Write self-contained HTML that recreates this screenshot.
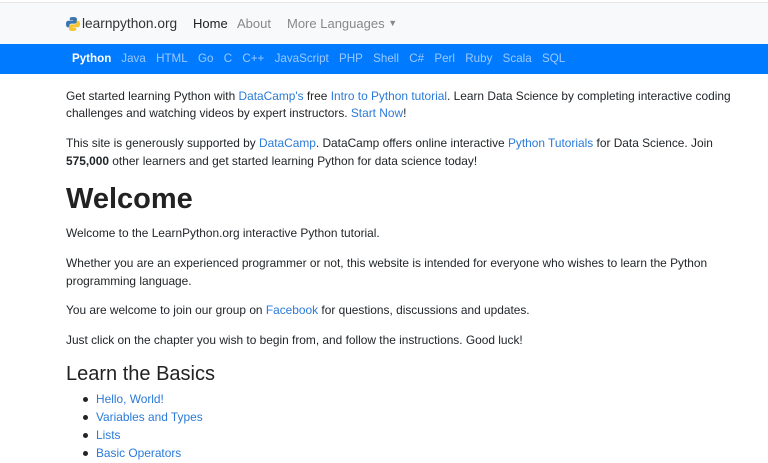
<!DOCTYPE html>
<html><head><style>
*{margin:0;padding:0;box-sizing:border-box}
body{width:768px;height:463px;overflow:hidden;background:#fff;font-family:"Liberation Sans","DejaVu Sans",sans-serif;color:#212529;position:relative}
.top{position:absolute;left:0;top:2px;width:768px;height:42px;background:#f8f9fa;border-top:1px solid #e6e6e6}
.blue{position:absolute;left:0;top:44px;width:768px;height:30px;background:#007bff}
.a{position:absolute;white-space:nowrap}
.l{position:absolute;left:66px;white-space:nowrap;font-size:11.9px;line-height:18px}
a{color:#2a7ad8;text-decoration:none}
.bl span{margin-right:10.3px;color:#9cc8ff}
ul li{position:absolute;left:96px;font-size:11.9px;line-height:18px;white-space:nowrap;list-style:none}
ul li:before{content:"";position:absolute;left-13px;left:-13px;top:7px;width:5px;height:5px;border-radius:50%;background:#212529}
</style></head><body>
<div class="top"></div>
<svg class="a" style="left:66px;top:17px" width="14" height="14" viewBox="0 0 14 14"><path d="M7 0C3.5 0 3.8 1.5 3.8 1.5V3.2H7.1V3.7H2.4S0 3.4 0 7s2.1 3.4 2.1 3.4h1.3V8.7s-.1-2.1 2.1-2.1h3.4s2 0 2-2V1.9S11.2 0 7 0z" fill="#3a75b0"/><path d="M7 14c3.5 0 3.2-1.5 3.2-1.5v-1.7H6.9v-.5h4.7S14 10.6 14 7s-2.1-3.4-2.1-3.4h-1.3v1.7s.1 2.1-2.1 2.1H5.1s-2 0-2 2v3.2S2.8 14 7 14z" fill="#f5c534"/></svg>
<div class="a" style="left:82px;top:16px;font-size:13.7px;color:#333">learnpython.org</div>
<div class="a" style="left:193px;top:16px;font-size:13px;color:#222">Home</div>
<div class="a" style="left:237px;top:16px;font-size:13px;color:#888">About</div>
<div class="a" style="left:287px;top:16px;font-size:13px;color:#888">More Languages <span style="font-size:9px;position:relative;top:-2px">▼</span></div>
<div class="blue"></div>
<div class="a bl" style="left:72px;top:52px;font-size:11.6px"><span style="color:#fff;font-weight:bold;margin-right:10px">Python</span><span>Java</span><span>HTML</span><span>Go</span><span>C</span><span>C++</span><span>JavaScript</span><span>PHP</span><span>Shell</span><span>C#</span><span>Perl</span><span>Ruby</span><span>Scala</span><span>SQL</span></div>
<div class="l" style="top:87px">Get started learning Python with <a>DataCamp's</a> free <a>Intro to Python tutorial</a>. Learn Data Science by completing interactive coding</div>
<div class="l" style="top:104px">challenges and watching videos by expert instructors. <a>Start Now</a>!</div>
<div class="l" style="top:134px">This site is generously supported by <a>DataCamp</a>. DataCamp offers online interactive <a>Python Tutorials</a> for Data Science. Join</div>
<div class="l" style="top:152px"><b>575,000</b> other learners and get started learning Python for data science today!</div>
<div class="a" style="left:66px;top:183px;font-size:29px;font-weight:bold;color:#222">Welcome</div>
<div class="l" style="top:224px">Welcome to the LearnPython.org interactive Python tutorial.</div>
<div class="l" style="top:254px">Whether you are an experienced programmer or not, this website is intended for everyone who wishes to learn the Python</div>
<div class="l" style="top:272px">programming language.</div>
<div class="l" style="top:301px">You are welcome to join our group on <a>Facebook</a> for questions, discussions and updates.</div>
<div class="l" style="top:331px">Just click on the chapter you wish to begin from, and follow the instructions. Good luck!</div>
<div class="a" style="left:66px;top:363px;font-size:20px;color:#222;font-weight:500">Learn the Basics</div>
<ul>
<li style="top:390px"><a>Hello, World!</a></li>
<li style="top:408px"><a>Variables and Types</a></li>
<li style="top:426px"><a>Lists</a></li>
<li style="top:444px"><a>Basic Operators</a></li>
</ul>
</body></html>
